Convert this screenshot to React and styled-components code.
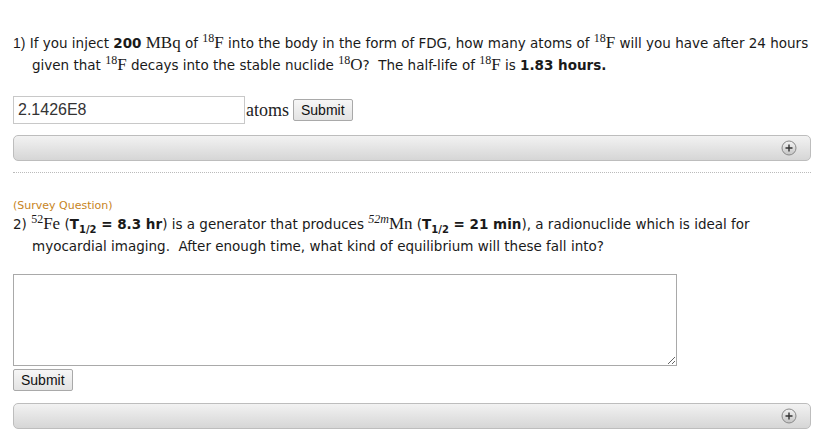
import React from 'react'
import { styled, createGlobalStyle } from 'styled-components'

const Global = createGlobalStyle`
  body {
    margin: 0;
    background: #fff;
    font-family: "DejaVu Sans", Verdana, sans-serif;
    color: #222;
  }
`

const Page = styled.div`
  padding: 32px 28px 0 13px;
  width: 798px;
`

const Question = styled.div`
  font-size: 13.5px;
  line-height: 22px;
  padding-left: 19px;
  text-indent: -19px;
  color: #1a1a1a;
`

const Num = styled.span`
  font-family: "Liberation Sans", Arial, sans-serif;
  font-size: 14px;
`

const M = styled.span`
  font-family: "Liberation Serif", "Times New Roman", serif;
  font-size: 17px;
`

const Sup = styled.sup`
  font-family: "Liberation Serif", "Times New Roman", serif;
  font-size: 12px;
  vertical-align: 6px;
  line-height: 0;
  font-style: ${p => (p.$italic ? 'italic' : 'normal')};
`

const Sub = styled.sub`
  font-size: 10px;
  line-height: 0;
`

const AnswerRow = styled.div`
  display: flex;
  align-items: center;
  margin-top: 20px;
`

const TextInput = styled.input`
  box-sizing: border-box;
  width: 232px;
  height: 28px;
  border: 1px solid #c8c8c8;
  padding: 2px 4px;
  font-family: "Liberation Sans", Arial, sans-serif;
  font-size: 16px;
  color: #333;
  outline: none;
`

const Unit = styled.span`
  font-family: "Liberation Serif", "Times New Roman", serif;
  font-size: 18px;
  margin: 0 4px 0 1px;
`

const Button = styled.button`
  font-family: "Liberation Sans", Arial, sans-serif;
  font-size: 14px;
  height: 22px;
  padding: 0 7px;
  border: 1px solid #a9a9a9;
  border-radius: 2px;
  background: linear-gradient(#f6f6f6, #e3e3e3);
  color: #111;
`

const Bar = styled.div`
  box-sizing: border-box;
  height: 26px;
  margin-top: ${p => p.$top || 12}px;
  border: 1px solid #bdbdbd;
  border-radius: 5px;
  background: linear-gradient(#f2f2f2, #d6d6d6);
  display: flex;
  align-items: center;
  justify-content: flex-end;
  padding-right: 13px;
`

const PlusIcon = () => (
  <svg width="16" height="16" viewBox="0 0 16 16">
    <defs>
      <linearGradient id="pg" x1="0" y1="0" x2="0" y2="1">
        <stop offset="0" stopColor="#f4f4f4" />
        <stop offset="1" stopColor="#c4c4c4" />
      </linearGradient>
    </defs>
    <circle cx="8" cy="8" r="7" fill="url(#pg)" stroke="#8a8a8a" strokeWidth="1" />
    <path d="M4.5 8h7M8 4.5v7" stroke="#333" strokeWidth="1.4" />
  </svg>
)

const Divider = styled.div`
  margin-top: 11px;
  border-top: 1px dotted #bbb;
`

const Survey = styled.div`
  margin-top: 26px;
  font-size: 11px;
  color: #c7841d;
  line-height: 14px;
`

const TextArea = styled.textarea`
  display: block;
  box-sizing: border-box;
  width: 664px;
  height: 92px;
  margin-top: 17px;
  border: 1px solid #a9a9a9;
  resize: both;
  outline: none;
`

const SubmitRow = styled.div`
  margin-top: 3px;
`

export default function App() {
  return (
    <Page>
      <Global />
      <Question>
        <Num>1)</Num> If you inject <b>200</b> <M>MBq</M> of <Sup>18</Sup>
        <M>F</M> into the body in the form of FDG, how many atoms of{' '}
        <Sup>18</Sup>
        <M>F</M> will you have after 24 hours given that <Sup>18</Sup>
        <M>F</M> decays into the stable nuclide <Sup>18</Sup>
        <M>O</M>?&nbsp; The half-life of <Sup>18</Sup>
        <M>F</M> is <b>1.83 hours.</b>
      </Question>
      <AnswerRow>
        <TextInput defaultValue="2.1426E8" />
        <Unit>atoms</Unit>
        <Button>Submit</Button>
      </AnswerRow>
      <Bar $top={11}>
        <PlusIcon />
      </Bar>
      <Divider />
      <Survey>(Survey Question)</Survey>
      <Question>
        2) <Sup>52</Sup>
        <M>Fe</M> (<b>
          T<Sub>1/2</Sub> = 8.3 hr
        </b>) is a generator that produces <Sup $italic>52m</Sup>
        <M>Mn</M> (<b>
          T<Sub>1/2</Sub> = 21 min
        </b>), a radionuclide which is ideal for myocardial imaging.&nbsp; After enough
        time, what kind of equilibrium will these fall into?
      </Question>
      <TextArea />
      <SubmitRow>
        <Button>Submit</Button>
      </SubmitRow>
      <Bar $top={12}>
        <PlusIcon />
      </Bar>
    </Page>
  )
}
